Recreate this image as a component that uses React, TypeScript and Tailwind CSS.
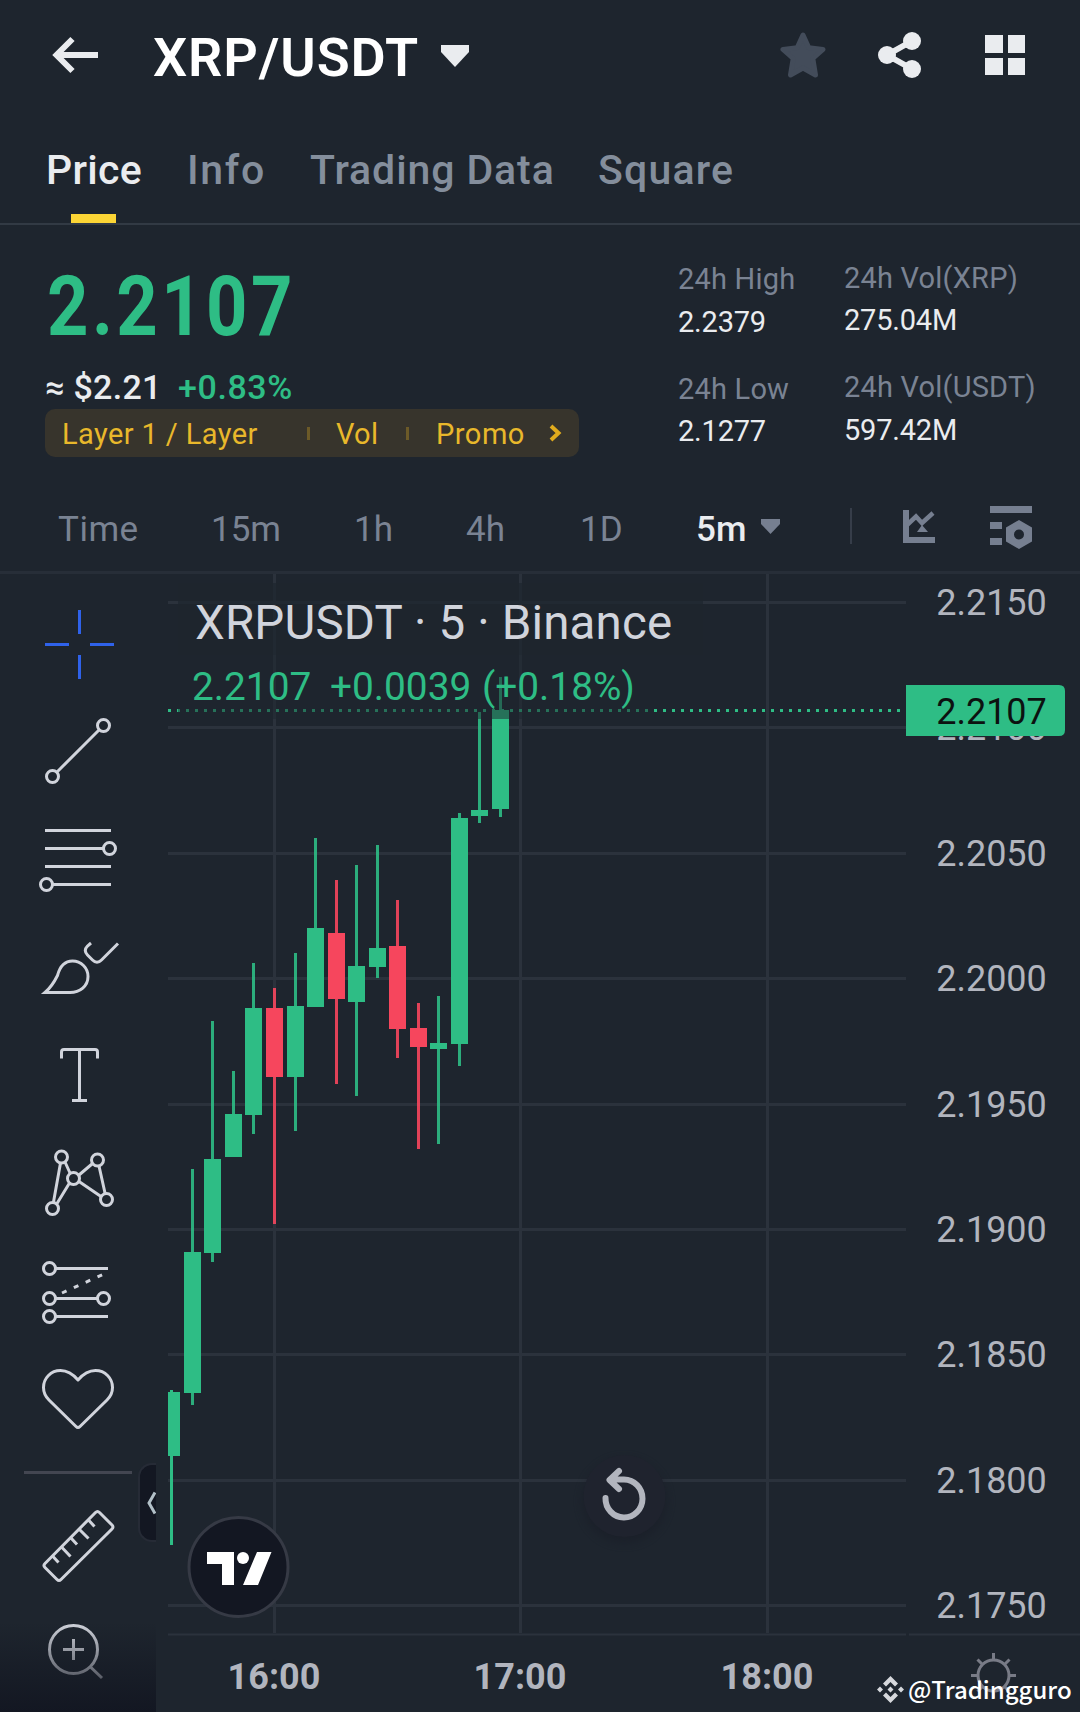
import React from 'react'

const UP = '#2ebd85'
const DOWN = '#f6465d'

interface Candle {
  x: number
  high: number
  top: number
  bottom: number
  low: number
  down?: boolean
}

const candles: Candle[] = [
  { x: 192.5, high: 1169, top: 1252, bottom: 1393, low: 1405 },
  { x: 212.5, high: 1021, top: 1159, bottom: 1253, low: 1262 },
  { x: 233.5, high: 1071, top: 1114, bottom: 1157, low: 1157 },
  { x: 253.5, high: 963, top: 1008, bottom: 1115, low: 1134 },
  { x: 274.5, high: 988, top: 1008, bottom: 1077, low: 1224, down: true },
  { x: 295.5, high: 953, top: 1006, bottom: 1077, low: 1131 },
  { x: 315.5, high: 838, top: 928, bottom: 1007, low: 1007 },
  { x: 336.5, high: 880, top: 933, bottom: 999, low: 1084, down: true },
  { x: 356.5, high: 865, top: 966, bottom: 1002, low: 1096 },
  { x: 377.5, high: 845, top: 948, bottom: 967, low: 978 },
  { x: 397.5, high: 900, top: 946, bottom: 1029, low: 1058, down: true },
  { x: 418.5, high: 1003, top: 1028, bottom: 1047, low: 1149, down: true },
  { x: 438.5, high: 996, top: 1043, bottom: 1049, low: 1144 },
  { x: 459.5, high: 813, top: 818, bottom: 1044, low: 1066 },
  { x: 479.5, high: 712, top: 810, bottom: 816, low: 823 },
  { x: 500.5, high: 677, top: 710, bottom: 809, low: 817 },
]

const priceLevels = [
  { label: '2.2150', y: 602.5 },
  { label: '2.2100', y: 727.5 },
  { label: '2.2050', y: 853.5 },
  { label: '2.2000', y: 978.5 },
  { label: '2.1950', y: 1104.5 },
  { label: '2.1900', y: 1229.5 },
  { label: '2.1850', y: 1354.5 },
  { label: '2.1800', y: 1480.5 },
  { label: '2.1750', y: 1605.5 },
]

const hours = [
  { label: '16:00', x: 274.5 },
  { label: '17:00', x: 520.5 },
  { label: '18:00', x: 767.5 },
]

const Header = () => (
  <header className="flex h-[110px] items-center pl-[52px]">
    <svg width="47" height="38" viewBox="0 0 47 38" fill="none" stroke="#eaecef" strokeWidth="6">
      <path d="M46 19H5M20.500 3L4.500 19l16 16" />
    </svg>
    <h1 className="ml-[54px] w-[288px] whitespace-nowrap pt-[5px] text-[54px] font-semibold leading-[60px] tracking-[0.9px] text-white">
      XRP/USDT
    </h1>
    <svg className="mt-px" width="28" height="22" viewBox="0 0 28 22" fill="#eaecef">
      <path d="M0 0h28v7L14 22 0 7z" />
    </svg>
    {/* Actions */}
    <svg className="ml-[311px]" width="46" height="48" viewBox="0 0 46 48" fill="#434c5a" stroke="#434c5a" strokeWidth="5" strokeLinejoin="round">
      <path d="M23 4l5.800 12.800L43 18.500 32.800 27.500 35.500 44 23 37 10.500 44l2.700-16.500L3 18.500l14.200-1.700z" />
    </svg>
    <svg className="ml-[52px]" width="43" height="48" viewBox="0 0 43 48" fill="#eaecef">
      <path d="M34 10L9 24l25 14" fill="none" stroke="#eaecef" strokeWidth="6" />
      <circle cx="34" cy="10" r="9" />
      <circle cx="9" cy="24" r="9" />
      <circle cx="34" cy="38" r="9" />
    </svg>
    <div className="ml-[64px] grid grid-cols-2 gap-[5px]">
      <span className="h-[17.500px] w-[17.500px] bg-[#eaecef]" />
      <span className="h-[17.500px] w-[17.500px] bg-[#eaecef]" />
      <span className="h-[17.500px] w-[17.500px] bg-[#eaecef]" />
      <span className="h-[17.500px] w-[17.500px] bg-[#eaecef]" />
    </div>
  </header>
)

const Tabs = () => (
  <nav className="flex h-[115px] border-b-2 border-[#323a44] pl-[46px] pt-[35px] text-[41px] font-medium leading-[50px] text-[#848e9c]">
    <div className="relative w-[141px] tracking-[0.300px] text-[#eaecef]">
      Price
      <span className="absolute bottom-0 left-[25px] h-[9px] w-[45px] bg-[#fcd535]" />
    </div>
    <span className="w-[123px] tracking-[1.700px]">Info</span>
    <span className="w-[288px] whitespace-nowrap tracking-[0.900px]">Trading Data</span>
    <span className="tracking-[1.200px]">Square</span>
  </nav>
)

const Stat = ({ label, value }: { label: string; value: string }) => (
  <div className="whitespace-nowrap text-[29px] leading-[40px]">
    <div className="tracking-[0.200px] text-[#7a8393]">{label}</div>
    <div className="mt-[2.500px] tracking-[-0.200px] text-[#eaecef]">{value}</div>
  </div>
)

const Summary = () => (
  <section className="flex h-[262px]">
    <div className="w-[678px] pl-[45px] pt-[40px]">
      <div className="ml-[2px] w-[300px] origin-left scale-x-[0.86] text-[84px] font-bold leading-[84px] tracking-[4px] text-[#2ebd85]">
        2.2107
      </div>
      <div className="mt-[18px] flex whitespace-nowrap text-[34px] font-medium leading-[40px]">
        <span className="w-[133px] tracking-[0.300px] text-[#eaecef]">≈ $2.21</span>
        <span className="tracking-[0.600px] text-[#2ebd85]">+0.83%</span>
      </div>
      <div className="mt-[2px] flex h-[48px] w-[534px] items-center rounded-[10px] bg-[#37342c] pl-[17px] text-[29px] text-[#e9b82b]">
        <span className="w-[245px] whitespace-nowrap pt-[3px] tracking-[0.400px]">Layer 1 / Layer</span>
        <span className="h-[13px] w-[3px] bg-[#6c5a28]" />
        <span className="ml-[26px] w-[70px] pt-[3px] tracking-[0.300px]">Vol</span>
        <span className="h-[13px] w-[3px] bg-[#6c5a28]" />
        <span className="ml-[27px] w-[113px] pt-[3px] tracking-[0.500px]">Promo</span>
        <svg width="13" height="18" viewBox="0 0 13 18" fill="none" stroke="#e0ab1d" strokeWidth="4">
          <path d="M2 2l7.500 7L2 16" />
        </svg>
      </div>
    </div>
    <div className="w-[166px] space-y-[27px] pt-[34px]">
      <Stat label="24h High" value="2.2379" />
      <Stat label="24h Low" value="2.1277" />
    </div>
    <div className="space-y-[27px] pt-[32.500px]">
      <Stat label="24h Vol(XRP)" value="275.04M" />
      <Stat label="24h Vol(USDT)" value="597.42M" />
    </div>
  </section>
)

const Intervals = () => (
  <div className="flex h-[87px] items-center whitespace-nowrap border-b-[3px] border-[#272e38] pl-[58px] text-[35px] text-[#7a8393]">
    <span className="w-[153px] pt-[2px] tracking-[0.500px]">Time</span>
    <span className="w-[143px] pt-[2px]">15m</span>
    <span className="w-[112px] pt-[2px]">1h</span>
    <span className="w-[114px] pt-[2px]">4h</span>
    <span className="w-[116px] pt-[2px]">1D</span>
    <span className="w-[65px] pt-[2px] font-medium text-[#eaecef]">5m</span>
    <svg className="-mt-1.5" width="19" height="15" viewBox="0 0 19 15" fill="#767f90">
      <path d="M0 0h19v5L9.500 15 0 5z" />
    </svg>
    <span className="-mt-1.5 ml-[70px] h-9 w-[2px] bg-[#363d49]" />
    <svg className="-mt-1.5 ml-[51px]" width="33" height="33" viewBox="0 0 33 33" fill="none" stroke="#767f90" strokeWidth="6">
      <path d="M3 0v30H32" />
      <path d="M4 15l9-8.500 6 6.500L30 3" strokeWidth="4.500" />
      <path d="M19 15l6 7H14z" fill="#767f90" stroke="none" />
    </svg>
    <svg className="-mt-[3px] ml-[54px]" width="42" height="44" viewBox="0 0 42 44" fill="#767f90">
      <path d="M0 0h42v7H0zM0 16h12v7H0zM0 32h12v7H0z" />
      <path fillRule="evenodd" d="M29 14l13 7.500v14L29 43l-13-7.500v-14zM29 23.500a5 5 0 1 0 0 10a5 5 0 1 0 0-10z" />
    </svg>
  </div>
)

const Tool = ({ children, color = '#d1d4dc' }: { children: React.ReactNode; color?: string }) => (
  <svg className="block shrink-0" width="156" height="108" viewBox="0 0 156 108" fill="none" stroke={color} strokeWidth="3">
    {children}
  </svg>
)

const Toolbar = () => (
  <aside className="relative flex w-[156px] shrink-0 flex-col pt-4">
    {/* Crosshair */}
    <Tool color="#2f62ea">
      <path d="M79.500 20v24M79.500 65v24M45 54.500h24M90 54.500h24" />
    </Tool>
    {/* Trend line */}
    <Tool>
      <path d="M57 74L99 32" />
      <circle cx="103.500" cy="27.500" r="6" />
      <circle cx="52.500" cy="78.500" r="6" />
    </Tool>
    {/* Fib retracement */}
    <Tool>
      <path d="M45 24.500h66M45 42.500h58M45 60.500h66M53 78.500h58" />
      <circle cx="109.500" cy="42.500" r="6" />
      <circle cx="46.500" cy="78.500" r="6" />
    </Tool>
    {/* Brush */}
    <Tool>
      <path d="M45 78.500c6-5 9.500-11 12.500-17C60 52 65 47 72.500 47A15.500 15.500 0 0 1 88 62.500C88 72 80 78.500 70 78.500z" />
      <path d="M118 29.500L101.500 46c-3 3-6 3-9 0l-5-5c-3-3-3-6 0-9l3.500-3" />
    </Tool>
    {/* Text */}
    <Tool>
      <path d="M61.500 36.500v-6.500q0-2.500 2.500-2.500h31q2.500 0 2.500 2.500v6.500M79.500 28v50M72 78.500h15" />
    </Tool>
    {/* Pattern */}
    <Tool>
      <path d="M60.500 33L53.500 72M65 32l5 11M79 45l13-11M99 36l6 27M79 51.500l22 15M69.500 53L57 73.500" />
      <circle cx="61.500" cy="27" r="6" />
      <circle cx="97.500" cy="30" r="6" />
      <circle cx="73.500" cy="48.500" r="6" />
      <circle cx="52.500" cy="78.500" r="6" />
      <circle cx="106.500" cy="69.500" r="6" />
    </Tool>
    {/* Forecast */}
    <Tool>
      <path d="M56 30.500h52M56 60.500h41M56 78.500h52" />
      <path d="M62 55L104 36" strokeDasharray="5 8" />
      <circle cx="49.500" cy="30.500" r="6" />
      <circle cx="49.500" cy="60.500" r="6" />
      <circle cx="49.500" cy="78.500" r="6" />
      <circle cx="103.500" cy="60.500" r="6" />
    </Tool>
    {/* Favorites */}
    <Tool>
      <path strokeLinejoin="round" d="M78 34C72 27 67 24.500 60.500 24.500 51 24.500 43.500 32 43.500 41.500c0 5 2 9 5.500 12.500L76 80.500q2 2 4 0L107 54c3.500-3.500 5.500-7.500 5.500-12.500 0-9.500-7.500-17-17-17C89 24.500 84 27 78 34z" />
    </Tool>
    <div className="mb-[18px] ml-6 mt-[17px] h-[3px] w-[108px] shrink-0 bg-[#434651]" />
    {/* Measure */}
    <Tool>
      <path strokeLinejoin="round" d="M95.500 20.500q2-2 4 0L112 33q2 2 0 4L61 87.500q-2 2-4 0L45 75.500q-2-2 0-4z" />
      <path d="M52.500 64l6 6.500M61.500 55l9 9.500M71 46l6 6.500M79.500 37.500l9 9M88.500 28l6 6.500" />
    </Tool>
    {/* Zoom */}
    <Tool>
      <circle cx="73.500" cy="49.500" r="24" />
      <path d="M63 49.500h21M73.500 39v21M90.500 67l11.500 11" />
    </Tool>
    <div className="absolute bottom-0 left-0 h-[90px] w-[156px] bg-gradient-to-b from-transparent to-[#131722]" />
    {/* Collapse handle */}
    <div className="absolute left-[138px] top-[889px] flex h-[79px] w-[18px] items-center justify-end rounded-l-[14px] border-2 border-r-0 border-[#262b36] bg-[#131722]">
      <svg width="9" height="24" viewBox="0 0 9 24" fill="none" stroke="#b2c0c8" strokeWidth="3">
        <path d="M8 1.500L2 12l6 10.500" />
      </svg>
    </div>
  </aside>
)

const Chart = () => (
  <div className="relative flex-1">
    <svg className="block" width="924" height="1138" viewBox="156 574 924 1138">
      {/* Grid */}
      <g stroke="#2b323c" strokeWidth="3">
        {priceLevels.map((p) => (
          <path key={p.label} d={`M168 ${p.y}H906`} />
        ))}
        {hours.map((h) => (
          <path key={h.label} d={`M${h.x} 574V1633`} />
        ))}
        <path d="M168 1634.500H906M909 1634.500H1080" strokeWidth="2" />
      </g>

      {/* Candles */}
      <rect x="168" y="1392" width="12" height="64" fill={UP} />
      <rect x="170" y="1390" width="3" height="155" fill={UP} />
      {candles.map((c) => (
        <g key={c.x} fill={c.down ? DOWN : UP}>
          <rect x={c.x - 1.5} y={c.high} width="3" height={c.low - c.high} opacity="0.9" />
          <rect x={c.x - 8.5} y={c.top} width="17" height={c.bottom - c.top} />
        </g>
      ))}
      <path d="M168 710.500H906" stroke={UP} strokeWidth="3" strokeDasharray="3 6" />

      {/* Axes */}
      <g fill="#b2b5be" fontSize="36" textAnchor="middle">
        {priceLevels.map((p) => (
          <text key={p.label} x="991.500" y={p.y + 12.5}>{p.label}</text>
        ))}
        {hours.map((h) => (
          <text key={h.label} x={h.x - 0.5} y="1689" fontWeight="700">{h.label}</text>
        ))}
      </g>
      <path d="M906 685h153q6 0 6 6v39q0 6-6 6H906z" fill={UP} />
      <text x="991.500" y="724" fontSize="36" textAnchor="middle" fill="#0c1210">2.2107</text>

      {/* Reset button */}
      <g>
        <circle cx="624.500" cy="1501" r="42" fill="#191d27" opacity="0.6" className="blur-[4px]" />
        <circle cx="624.500" cy="1496" r="41" fill="#1f232e" />
        <path d="M605.500 1498a18.500 19 0 1 0 18.500-18.500H610.500M619 1471l-9.500 9 9.500 9" fill="none" stroke="#b2b5be" strokeWidth="6" strokeLinecap="round" strokeLinejoin="round" />
      </g>

      {/* TradingView mark */}
      <circle cx="238.500" cy="1567" r="49.500" fill="#131722" stroke="#363a45" strokeWidth="3" />
      <path d="M207 1552h27v33h-12v-21h-15zM257 1552h14.500l-13.500 33h-15z" fill="#fff" />
      <circle cx="243" cy="1558" r="6" fill="#fff" />

      {/* Axis settings */}
      <g fill="none" stroke="#787b86" strokeWidth="3">
        <circle cx="993.500" cy="1675.500" r="15.500" />
        <path d="M993.500 1660v-7M1009 1675.500h7M978 1675.500h-7M1004.500 1664.500l5-5M982.500 1664.500l-5-5M982.500 1686.500l-5 5M1004.500 1686.500l5 5M993.500 1691v7" />
      </g>
    </svg>

    {/* Legend */}
    <div className="absolute left-[22px] top-[9px] whitespace-nowrap">
      <div className="h-[72px] w-[525px] bg-[#1e252e]/70 pl-[17px] pt-2 text-[47.500px] leading-[64px] tracking-[0.150px] text-[#d1d4dc]">
        XRPUSDT · 5 · Binance
      </div>
      <div className="flex h-[64px] w-[475px] bg-[#1e252e]/50 pl-[14px] text-[38.800px] leading-[64px] text-[#2ebd85]">
        <span className="w-[138px]">2.2107</span>
        <span className="w-[152px]">+0.0039</span>
        <span>(+0.18%)</span>
      </div>
    </div>

    {/* Watermark */}
    <div className="absolute bottom-[5px] right-[7px] flex items-center gap-[4px]">
      <svg width="27" height="27" viewBox="0 0 27 27" fill="#d6d8dc">
        <path d="M13.500 0l7.500 7.500-3 3-4.500-4.500-4.500 4.500-3-3zM13.500 27l7.500-7.500-3-3-4.500 4.500-4.500-4.500-3 3zM13.500 10.500l3 3-3 3-3-3zM3 10.500l3 3-3 3-3-3zM24 10.500l3 3-3 3-3-3z" />
      </svg>
      <span className="w-[165px] whitespace-nowrap font-['Noto_Sans_CJK_SC',sans-serif] text-[24px] font-medium leading-[36px] text-white">
        @Tradingguro
      </span>
    </div>
  </div>
)

export default function App() {
  return (
    <div className="flex h-[1712px] w-[1080px] flex-col overflow-hidden bg-[#1e252e] font-['Roboto',sans-serif]">
      <Header />
      <Tabs />
      <Summary />
      <Intervals />
      <main className="flex flex-1">
        <Toolbar />
        <Chart />
      </main>
    </div>
  )
}
